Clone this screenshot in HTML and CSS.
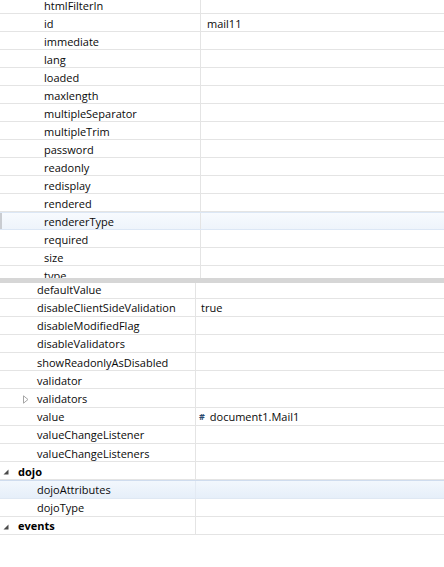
FILE: index.html
```html
<!DOCTYPE html>
<html>
<head>
<meta charset="utf-8">
<link rel="stylesheet" href="styles.css">
</head>
<body>
<div class="page">
  <div class="panel panel-top">
    <div class="list list-top">
      <div class="row"><div class="name">htmlFilterIn</div><div class="val"></div></div>
      <div class="row"><div class="name">id</div><div class="val">mail11</div></div>
      <div class="row"><div class="name">immediate</div><div class="val"></div></div>
      <div class="row"><div class="name">lang</div><div class="val"></div></div>
      <div class="row"><div class="name">loaded</div><div class="val"></div></div>
      <div class="row"><div class="name">maxlength</div><div class="val"></div></div>
      <div class="row"><div class="name">multipleSeparator</div><div class="val"></div></div>
      <div class="row"><div class="name">multipleTrim</div><div class="val"></div></div>
      <div class="row"><div class="name">password</div><div class="val"></div></div>
      <div class="row"><div class="name">readonly</div><div class="val"></div></div>
      <div class="row"><div class="name">redisplay</div><div class="val"></div></div>
      <div class="row"><div class="name">rendered</div><div class="val"></div></div>
      <div class="row row-hover"><div class="name">rendererType</div><div class="val"></div></div>
      <div class="row"><div class="name">required</div><div class="val"></div></div>
      <div class="row"><div class="name">size</div><div class="val"></div></div>
      <div class="row"><div class="name">type</div><div class="val"></div></div>
    </div>
  </div>
  <div class="splitter"></div>
  <div class="panel panel-bottom">
    <div class="list list-bottom">
      <div class="row"><div class="name">defaultValue</div><div class="val"></div></div>
      <div class="row"><div class="name">disableClientSideValidation</div><div class="val">true</div></div>
      <div class="row"><div class="name">disableModifiedFlag</div><div class="val"></div></div>
      <div class="row"><div class="name">disableValidators</div><div class="val"></div></div>
      <div class="row"><div class="name">showReadonlyAsDisabled</div><div class="val"></div></div>
      <div class="row"><div class="name">validator</div><div class="val"></div></div>
      <div class="row"><div class="name"><svg class="tw-collapsed" width="6" height="9" viewBox="0 0 6 9"><path d="M0.5 0.8 L5 4.5 L0.5 8.2 Z" fill="none" stroke="#a6a6a6" stroke-width="1"/></svg>validators</div><div class="val"></div></div>
      <div class="row"><div class="name">value</div><div class="val"><span class="hash">#</span>document1.Mail1</div></div>
      <div class="row"><div class="name">valueChangeListener</div><div class="val"></div></div>
      <div class="row"><div class="name">valueChangeListeners</div><div class="val"></div></div>
      <div class="row row-cat"><div class="name"><svg class="tw-expanded" width="6" height="6" viewBox="0 0 6 6"><path d="M5.5 0.5 L5.5 5.5 L0.5 5.5 Z" fill="#4a4a4a"/></svg>dojo</div><div class="val"></div></div>
      <div class="row row-sel"><div class="name">dojoAttributes</div><div class="val"></div></div>
      <div class="row"><div class="name">dojoType</div><div class="val"></div></div>
      <div class="row row-cat"><div class="name"><svg class="tw-expanded" width="6" height="6" viewBox="0 0 6 6"><path d="M5.5 0.5 L5.5 5.5 L0.5 5.5 Z" fill="#4a4a4a"/></svg>events</div><div class="val"></div></div>
    </div>
  </div>
</div>
</body>
</html>
```
FILE: styles.css
```css
html, body {
  margin: 0;
  padding: 0;
  background: #ffffff;
}
.page {
  width: 444px;
  height: 567px;
  overflow: hidden;
  font-family: "Open Sans", "Liberation Sans", sans-serif;
  font-size: 11px;
  color: #0a0a0a;
  display: flex;
  flex-direction: column;
}
.panel {
  overflow: hidden;
}
.panel-top {
  height: 278px;
  flex: none;
}
.panel-bottom {
  flex: 1;
}
.splitter {
  height: 5px;
  flex: none;
  background: #d6d6d6;
}
.list-top {
  margin-top: -4px;
}
.list-bottom {
  margin-top: -2.7px;
}
.row {
  display: grid;
  box-sizing: border-box;
  border-bottom: 1px solid #e4e4e4;
  white-space: nowrap;
}
.list-top .row {
  height: 18px;
  grid-template-columns: 201px 1fr;
}
.list-bottom .row {
  height: 18.2px;
  grid-template-columns: 196px 1fr;
}
.name {
  display: flex;
  align-items: center;
  padding-top: 1px;
  border-right: 1px solid #e4e4e4;
}
.val {
  display: flex;
  align-items: center;
  padding-top: 1px;
}
.list-top .name {
  padding-left: 44px;
}
.list-top .val {
  padding-left: 6px;
}
.list-bottom .name {
  padding-left: 37px;
}
.list-bottom .val {
  padding-left: 5px;
}
.tw-collapsed {
  margin-left: -14px;
  margin-right: 8px;
  margin-top: 1px;
}
.row-cat .name {
  padding-left: 3px;
  font-weight: bold;
  color: #000000;
}
.tw-expanded {
  margin-right: 9px;
  margin-top: 2px;
}
.hash {
  font-size: 9px;
  font-weight: bold;
  color: #2c4a6e;
  margin-left: -2px;
  margin-right: 5px;
  align-self: flex-start;
  margin-top: 1px;
}
.row-hover {
  background: linear-gradient(#f7fafe, #eef4fb);
  border-top: 1px solid #dce7f5;
  border-bottom: 1px solid #dce7f5;
  box-shadow: inset 2px 0 0 #c9ccd1;
}
.row-sel {
  background: linear-gradient(#f2f7fd, #e6eff9);
  border-top: 1px solid #cfdcee;
  border-bottom: 1px solid #dfe8f3;
}
.row-sel .name {
  border-right-color: #e3eaf3;
}
```
